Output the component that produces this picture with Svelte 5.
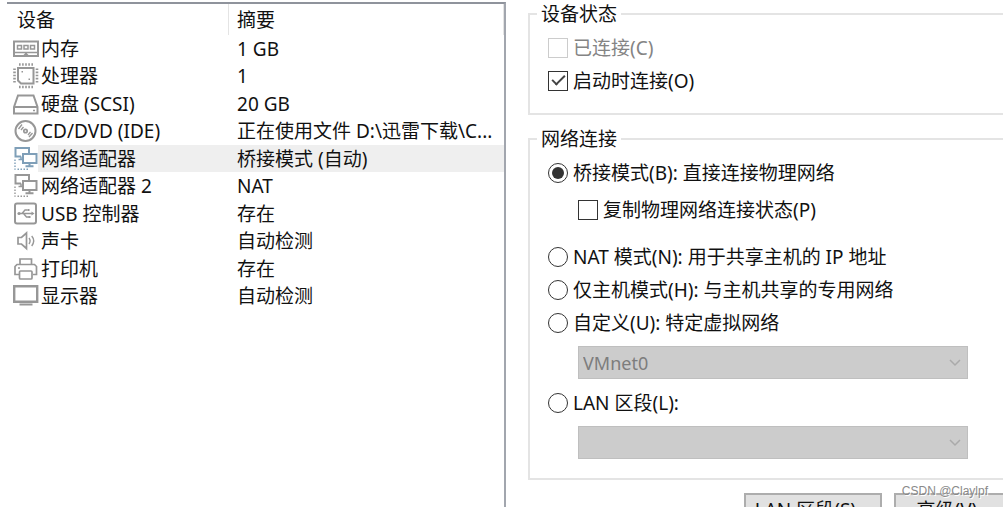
<script lang="ts">
    type Device = { icon: string; name: string; summary: string };

    const devices: Device[] = [
        { icon: "memory", name: "内存", summary: "1 GB" },
        { icon: "cpu", name: "处理器", summary: "1" },
        { icon: "disk", name: "硬盘 (SCSI)", summary: "20 GB" },
        { icon: "cd", name: "CD/DVD (IDE)", summary: "正在使用文件 D:\\迅雷下载\\C..." },
        { icon: "network", name: "网络适配器", summary: "桥接模式 (自动)" },
        { icon: "network", name: "网络适配器 2", summary: "NAT" },
        { icon: "usb", name: "USB 控制器", summary: "存在" },
        { icon: "sound", name: "声卡", summary: "自动检测" },
        { icon: "printer", name: "打印机", summary: "存在" },
        { icon: "display", name: "显示器", summary: "自动检测" },
    ];

    let selected = $state(4);
    let connectAtPowerOn = $state(true);
    let replicate = $state(false);
    let mode = $state("bridged");
</script>

{#snippet deviceIcon(name: string)}
    <svg class="icon" viewBox="0 0 26 26" aria-hidden="true">
        {#if name === "memory"}
            <path d="M1 5.500h24v14.500H1z" />
            <path d="M4.500 9.500h4v3.500h-4zM11 9.500h4v3.500h-4zM17.500 9.500h4v3.500h-4z" stroke-width="1.500" />
            <path d="M1 16.500h24M10.500 20l2.500-2.500 2.500 2.500" stroke-width="1.500" />
        {:else if name === "cpu"}
            <path d="M5 5h15.500v15.500H8L5 17.500z" />
            <path d="M6 1.500h14.500M6 24h14.500M1.500 5.500v14.500M24 5.500v14.500" stroke-width="2.600" stroke-dasharray="1.600 1.500" />
            <path d="M8.500 8h1.500v1.500H8.500zM15.500 15.500H17V17h-1.500z" fill="currentColor" stroke="none" />
        {:else if name === "disk"}
            <path d="M1 16L5 4.500h15.500L24.500 16v6.500H1zM1 16h23.500" />
            <path d="M20 19.500h2" stroke-width="1.500" />
        {:else if name === "cd"}
            <circle cx="12.500" cy="13" r="10" />
            <circle cx="12.500" cy="13" r="1.700" stroke-width="1.700" />
            <path d="M5.500 11l3.500-4.500M8 12l2.500-3M16 19l3.500-4M15 17l2.500-3" stroke-width="1.300" />
        {:else if name === "network"}
            <path d="M8 10.500H2.500V2h13.500v5.500" />
            <path d="M10 8h13.500v9H10zM16.500 17v3M12.500 20.300h8" />
            <path d="M2 13.500v10.300M4.500 23.300h11" stroke-dasharray="1.500 1.500" stroke-width="1.400" />
            <path d="M8 10.500v3M5.500 13.500H9" stroke-width="1.500" />
        {:else if name === "usb"}
            <rect x="2" y="2.500" width="21" height="20" rx="2" />
            <path d="M6 12.500h13M9 12.500l3-3.500h2.500M10.500 12.500l3 3.500h2.500" stroke-width="1.400" />
            <path d="M18.500 10.500l3 2-3 2zM14.500 8h2v2h-2zM15.500 15h2v2h-2z" fill="currentColor" stroke="none" />
            <circle cx="6" cy="12.500" r="1.600" fill="currentColor" stroke="none" />
        {:else if name === "sound"}
            <path d="M5 9.500h3.500l5-4.500v15.500l-5-4.500H5z" stroke-width="1.700" />
            <path d="M16 10c1.400 1.800 1.400 4 0 6M18.700 8c2.600 3 2.600 6.500 0 10" stroke-width="1.400" />
        {:else if name === "printer"}
            <path d="M7 8.500V3h11.500v5.500" stroke-width="1.700" />
            <path d="M6 18.500H2V10.500l2-2h17.500l2 2v8H20" stroke-width="1.700" />
            <rect x="6.500" y="15" width="12.500" height="8" rx="1" stroke-width="1.700" />
            <path d="M5 12h2" stroke-width="1.300" />
        {:else if name === "display"}
            <path d="M1.200 3.200h23v15.500h-23z" stroke-width="2.400" />
            <path d="M6.500 21.500h13" />
        {/if}
    </svg>
{/snippet}

{#snippet chevron()}
    <svg class="chevron" viewBox="0 0 12 8" aria-hidden="true">
        <path d="M1 1l5 5 5-5" />
    </svg>
{/snippet}

<div class="dialog">
    <div class="devices">
        <table>
            <colgroup>
                <col class="icon-col" />
                <col class="name-col" />
                <col />
            </colgroup>
            <thead>
                <tr>
                    <th colspan="2">设备</th>
                    <th class="summary">摘要</th>
                </tr>
            </thead>
            <tbody>
                {#each devices as device, i}
                    <tr class:selected={i === selected} onclick={() => (selected = i)}>
                        <td>{@render deviceIcon(device.icon)}</td>
                        <td class="name">{device.name}</td>
                        <td class="summary">{device.summary}</td>
                    </tr>
                {/each}
            </tbody>
        </table>
    </div>

    <div class="settings">
        <fieldset>
            <legend>设备状态</legend>
            <label class="disabled"><input type="checkbox" disabled />已连接(C)</label>
            <label><input type="checkbox" bind:checked={connectAtPowerOn} />启动时连接(O)</label>
        </fieldset>

        <fieldset class="connection">
            <legend>网络连接</legend>
            <label><input type="radio" value="bridged" bind:group={mode} />桥接模式(B): 直接连接物理网络</label>
            <label class="nested"><input type="checkbox" bind:checked={replicate} />复制物理网络连接状态(P)</label>
            <label><input type="radio" value="nat" bind:group={mode} />NAT 模式(N): 用于共享主机的 IP 地址</label>
            <label><input type="radio" value="host" bind:group={mode} />仅主机模式(H): 与主机共享的专用网络</label>
            <label><input type="radio" value="custom" bind:group={mode} />自定义(U): 特定虚拟网络</label>
            <div class="dropdown">
                <select aria-label="特定虚拟网络" disabled={mode !== "custom"}>
                    <option>VMnet0</option>
                </select>
                {@render chevron()}
            </div>
            <label><input type="radio" value="lan" bind:group={mode} />LAN 区段(L):</label>
            <div class="dropdown">
                <select aria-label="LAN 区段" disabled={mode !== "lan"}>
                    <option></option>
                </select>
                {@render chevron()}
            </div>
        </fieldset>

        <div class="actions">
            <button type="button">LAN 区段(S)...</button>
            <button type="button" class="advanced">高级(V)...</button>
        </div>
    </div>

    <span class="watermark">CSDN @Claylpf</span>
</div>

<style>
    :global(body) {
        background: #fff;
    }

    .dialog {
        position: relative;
        display: grid;
        grid-template-columns: 506fr 497fr;
        height: 100vh;
        overflow: hidden;
        font-family: "Noto Sans", "Noto Sans CJK SC", sans-serif;
        font-size: 19px;
        color: #111;
        white-space: nowrap;
    }

    .devices {
        margin: 2px 0 0 7px;
        border-top: 2px solid #8f939c;
        border-right: 2px solid #a2a6ae;
    }

    table {
        width: 100%;
        border-collapse: collapse;
        table-layout: fixed;
    }

    .icon-col {
        width: 31px;
    }

    .name-col {
        width: 191px;
    }

    th,
    td {
        height: 27px;
        padding: 0;
        line-height: 26px;
        text-align: left;
        font-weight: normal;
    }

    tr:nth-child(even) td {
        height: 28px;
    }

    th {
        height: 31px;
        padding-left: 10px;
        background: linear-gradient(#e4e4e4, #e4e4e4) right / 1px 100% no-repeat;
    }

    th.summary,
    td.summary {
        padding-left: 8px;
    }

    .name {
        padding-left: 3px;
    }

    .selected td + td {
        background: #efefef;
    }

    .icon {
        display: block;
        width: 26px;
        height: 26px;
        margin-left: 6px;
        color: #979797;
        fill: none;
        stroke: currentColor;
        stroke-width: 2;
    }

    .selected .icon {
        color: #7f9fb8;
    }

    .settings {
        display: flex;
        flex-direction: column;
        padding-left: 22px;
    }

    fieldset {
        min-width: 0;
        margin: 0;
        padding: 3px 35px 16px 18px;
        border: 2px solid #e4e4e4;
        border-right: none;
    }

    .connection {
        margin-top: 10px;
        padding-bottom: 19px;
    }

    legend {
        margin-left: -11px;
        padding: 0 4px;
        line-height: 28px;
    }

    label {
        display: flex;
        align-items: center;
        gap: 5px;
        height: 33px;
        line-height: 28px;
    }

    .disabled {
        color: #848484;
    }

    .nested {
        margin: 4px 0 14px 30px;
    }

    input {
        appearance: none;
        display: grid;
        place-items: center;
        flex: none;
        width: 20px;
        height: 20px;
        margin: 0;
        border: 1px solid #333;
        background: #fff;
    }

    input:disabled {
        border-color: #ccc;
    }

    input[type="radio"] {
        border-radius: 50%;
    }

    input[type="checkbox"]:checked::after {
        content: "";
        width: 13px;
        height: 7px;
        margin-bottom: 4px;
        border: solid #444;
        border-width: 0 0 2px 2px;
        box-sizing: border-box;
        transform: rotate(-45deg);
    }

    input[type="radio"]:checked::after {
        content: "";
        width: 12px;
        height: 12px;
        border-radius: 50%;
        background: #333;
    }

    .dropdown {
        position: relative;
        margin: 7px 0 7px 30px;
    }

    .dropdown:last-child {
        margin-bottom: 0;
    }

    select {
        display: block;
        appearance: none;
        width: 100%;
        height: 33px;
        padding: 0 28px 0 4px;
        border: 1px solid #bfbfbf;
        border-radius: 0;
        background: #ccc;
        color: #111;
        font: inherit;
        font-size: 18px;
    }

    select:disabled {
        color: #7d7d7d;
        opacity: 1;
    }

    .chevron {
        position: absolute;
        top: 13px;
        right: 7px;
        width: 12px;
        height: 8px;
        fill: none;
        stroke: #aaa;
        stroke-width: 1.500;
        pointer-events: none;
    }

    .actions {
        display: flex;
        justify-content: flex-end;
        gap: 12px;
        margin: 13px -12px 0 0;
    }

    button {
        flex: none;
        width: 138px;
        height: 33px;
        padding: 0;
        border: 2px solid #adadad;
        border-radius: 0;
        background: #e1e1e1;
        color: #111;
        font: inherit;
        line-height: 26px;
    }

    .advanced {
        width: 121px;
    }

    .watermark {
        position: absolute;
        right: 15px;
        bottom: 8px;
        font: 12px/16px "Liberation Sans", sans-serif;
        color: #8a8a8a;
        text-shadow: 1px 1px 0 #fff;
    }
</style>
